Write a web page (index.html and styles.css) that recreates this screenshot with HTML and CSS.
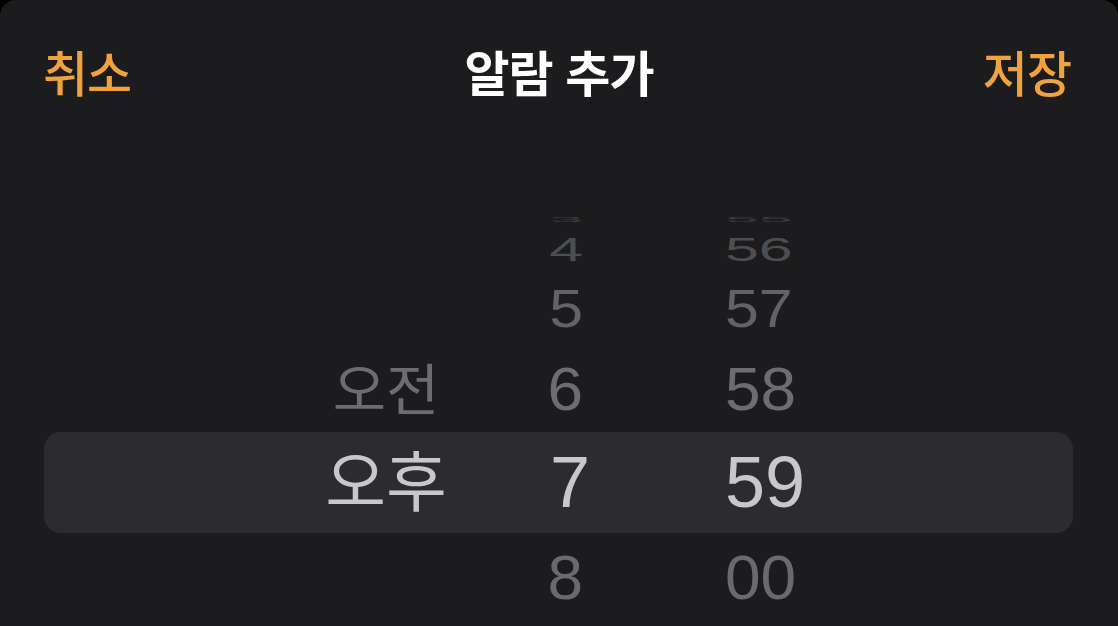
FILE: index.html
```html
<!DOCTYPE html>
<html lang="ko">
<head>
<meta charset="utf-8">
<title>알람 추가</title>
<link rel="stylesheet" href="styles.css">
</head>
<body>
<div class="sheet">
  <header class="nav">
    <span class="nav-btn">취소</span>
    <span class="nav-title">알람 추가</span>
    <span class="nav-btn">저장</span>
  </header>
  <div class="picker">
    <div class="highlight"></div>
    <div class="col ampm">
      <div class="item o-4"></div>
      <div class="item o-3"></div>
      <div class="item o-2"></div>
      <div class="item o-1">오전</div>
      <div class="item o0">오후</div>
      <div class="item o1"></div>
    </div>
    <div class="col hour">
      <div class="item o-4">3</div>
      <div class="item o-3">4</div>
      <div class="item o-2">5</div>
      <div class="item o-1">6</div>
      <div class="item o0">7</div>
      <div class="item o1">8</div>
    </div>
    <div class="col minute">
      <div class="item o-4">55</div>
      <div class="item o-3">56</div>
      <div class="item o-2">57</div>
      <div class="item o-1">58</div>
      <div class="item o0">59</div>
      <div class="item o1">00</div>
    </div>
  </div>
</div>
</body>
</html>
```
FILE: styles.css
```css
html, body {
  margin: 0;
  padding: 0;
  background: #000;
}
body {
  width: 1118px;
  height: 626px;
  overflow: hidden;
  font-family: "Noto Sans CJK KR", "Noto Sans", sans-serif;
}
.sheet {
  width: 1118px;
  height: 626px;
  background: #1c1c1e;
  border-radius: 16px 16px 0 0;
  overflow: hidden;
}
.nav {
  height: 140px;
  display: flex;
  align-items: center;
  justify-content: space-between;
  padding: 0 47px 0 43px;
  font-size: 49px;
  line-height: 1;
}
.nav-btn {
  color: #f0a33c;
  font-weight: 500;
  letter-spacing: -1px;
}
.nav-title {
  color: #fff;
  font-weight: 700;
  letter-spacing: -1px;
  margin-left: 4px;
}
.picker {
  position: relative;
  margin-top: 65px;
  display: grid;
  grid-template-columns: 172px 111px 1fr;
  padding-left: 300px;
}
.highlight {
  position: absolute;
  top: 227px;
  left: 44px;
  right: 45px;
  height: 101px;
  border-radius: 17px;
  background: #2c2c2e;
}
.col {
  position: relative;
  display: flex;
  flex-direction: column;
}
.item {
  font-family: "Liberation Sans", Arial, sans-serif;
  font-size: 64px;
  white-space: nowrap;
}
.ampm .item {
  font-family: "Noto Sans CJK KR", sans-serif;
  text-align: center;
}
.hour .item { text-align: right; transform-origin: 100% 50%; }
.minute { padding-left: 142px; }
.minute .item { text-align: left; transform-origin: 0 50%; }

.o-4 { height: 30px; line-height: 30px; color: #3a3a3a; transform: scale(0.95, 0.11); }
.o-3 { height: 30px; line-height: 30px; color: #4e4e50; transform: scale(0.95, 0.52); }
.o-2 { height: 88px; line-height: 88px; color: #636365; transform: scale(0.95, 0.83); }
.o-1 { height: 72px; line-height: 72px; color: #6d6d6f; transform: scale(1, 0.96); }
.o0  { height: 114px; line-height: 114px; color: #c8c8ca; font-size: 72px; }
.o1  { height: 76px; line-height: 76px; color: #6a6a6c; transform: scale(1, 0.98); }

.hour .o0 { transform: translateX(7px); }
.ampm .o-1 { font-size: 58px; line-height: 66px; }
.ampm .o0 { font-size: 66px; line-height: 104px; }
```
